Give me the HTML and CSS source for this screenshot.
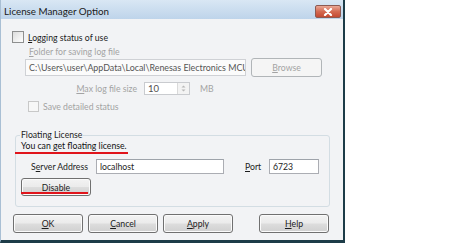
FILE: index.html
```html
<!DOCTYPE html>
<html>
<head>
<meta charset="utf-8">
<link rel="stylesheet" href="styles.css">
</head>
<body>
<div class="dialog">
  <div class="titlebar">
    <span class="title">License Manager Option</span>
    <span class="close"><svg width="12" height="8" viewBox="0 0 12 8"><path d="M3 1 L9 7 M9 1 L3 7" stroke="#fff" stroke-width="2.2" stroke-linecap="round"/></svg></span>
  </div>
  <div class="content">
    <div class="row-log">
      <span class="check"></span>
      <span class="lbl"><u>L</u>ogging status of use</span>
    </div>
    <div class="folder-lbl dis"><u>F</u>older for saving log file</div>
    <div class="row-path">
      <div class="field path">C:\Users\user\AppData\Local\Renesas Electronics MCU\</div>
      <div class="btn browse dis"><u>B</u>rowse</div>
    </div>
    <div class="row-max">
      <span class="max-lbl dis"><u>M</u>ax log file size</span>
      <div class="field spin"><span>10</span><span class="arrows"><svg width="9" height="11" viewBox="0 0 9 11"><path d="M2.5 4.5 L4.5 2.5 L6.5 4.5 Z M2.5 6.5 L4.5 8.5 L6.5 6.5 Z" fill="#b8b8b8"/></svg></span></div>
      <span class="mb dis">MB</span>
    </div>
    <div class="row-save">
      <span class="check small dis-check"></span>
      <span class="lbl dis">Save detailed status</span>
    </div>
    <div class="group">
      <div class="legend"><span>Floating License</span></div>
      <div class="msg">You can get floating license.</div>
      <div class="row-server">
        <span class="srv-lbl">S<u>e</u>rver Address</span>
        <div class="field host">localhost</div>
        <span class="port-lbl"><u>P</u>ort</span>
        <div class="field port">6723</div>
      </div>
      <div class="btn disable"><u>D</u>isable</div>
      <span class="redline line1"></span>
      <span class="redline line2"></span>
    </div>
    <div class="row-buttons">
      <div class="btn bb"><u>O</u>K</div>
      <div class="btn bb"><u>C</u>ancel</div>
      <div class="btn bb"><u>A</u>pply</div>
      <div class="btn bb help"><u>H</u>elp</div>
    </div>
  </div>
</div>
</body>
</html>
```
FILE: styles.css
```css
html, body {
  margin: 0;
  padding: 0;
  background: #ffffff;
}
body {
  font-family: Lato, "Liberation Sans", sans-serif;
  font-size: 8.7px;
  color: #1c1c1c;
  white-space: nowrap;
}
u { text-decoration: underline; text-underline-offset: 1px; text-decoration-thickness: 1px; }
.dialog {
  width: 342px;
  height: 240px;
  border-right: 2px solid #1d3c48;
  border-bottom: 3px solid #1d3c48;
  border-left: 1px solid #a9bfd4;
  background: #f2f3f5;
  display: flex;
  flex-direction: column;
}
.titlebar {
  height: 19px;
  flex: none;
  background: linear-gradient(#d9e7f4, #bed4ea);
  display: flex;
  align-items: flex-start;
  justify-content: space-between;
  padding: 0 2px 0 3px;
  box-sizing: border-box;
}
.title {
  font-size: 9.8px;
  line-height: 12px;
  margin-top: 5px;
  color: #1a1a1a;
}
.close {
  width: 24px;
  height: 11px;
  margin-top: 5px;
  border: 1px solid #8c5a52;
  border-radius: 2px;
  background: linear-gradient(#e9a896, #d46a52 50%, #c44a32);
  display: flex;
  align-items: center;
  justify-content: center;
}
.content {
  flex: 1;
  display: flex;
  flex-direction: column;
  padding: 0 0 0 11px;
}
.dis { color: #a3a3a3; }
.check {
  width: 10px;
  height: 10px;
  border: 1px solid #8e8f8f;
  background: linear-gradient(135deg, #dcdcdc, #ffffff);
  flex: none;
}
.dis-check { border-color: #c8c8c8; background: #f7f7f7; }
.row-log {
  display: flex;
  align-items: center;
  gap: 4px;
  margin-top: 12px;
  height: 12px;
}
.folder-lbl {
  margin-top: 3px;
  margin-left: 17px;
  height: 12px;
  line-height: 12px;
}
.row-path {
  display: flex;
  align-items: center;
  margin-left: 13px;
  height: 19px;
}
.field {
  background: #fff;
  border: 1px solid #abadb3;
  border-top-color: #9ea3aa;
  box-sizing: border-box;
  height: 15px;
  line-height: 13px;
  padding: 0 3px;
  overflow: hidden;
}
.path {
  width: 221px;
  height: 17px;
  line-height: 15px;
  color: #555;
  background: #fbfbfb;
  border-color: #cfd1d5;
  padding-left: 3px;
  font-size: 8.9px;
}
.btn {
  box-sizing: border-box;
  border: 1px solid #707070;
  border-radius: 3px;
  background: linear-gradient(#f3f3f3 0%, #ebebeb 48%, #dddddd 52%, #d0d0d0 100%);
  display: flex;
  align-items: center;
  justify-content: center;
  box-shadow: inset 0 0 0 1px #fbfbfb;
}
.browse {
  width: 71px;
  height: 19px;
  margin-left: 5px;
  border-color: #b1b5b8;
  background: #f5f5f5;
  box-shadow: none;
}
.row-max {
  display: flex;
  align-items: center;
  margin-top: 5px;
  height: 13px;
}
.max-lbl {
  width: 125px;
  text-align: right;
}
.spin {
  width: 46px;
  height: 13px;
  line-height: 11px;
  margin-left: 7px;
  display: flex;
  justify-content: space-between;
  padding: 0 0 0 3px;
  color: #505050;
  border-color: #c9cbcf;
  font-size: 9.5px;
}
.arrows {
  width: 11px;
  height: 11px;
  border-left: 1px solid #dadada;
  display: flex;
  align-items: center;
  justify-content: center;
  background: #f3f3f3;
}
.mb { margin-left: 10px; }
.row-save {
  display: flex;
  align-items: center;
  gap: 4px;
  margin-top: 6px;
  margin-left: 16px;
  height: 11px;
}
.small { width: 9px; height: 9px; }
.group {
  position: relative;
  margin: 23px 0 0 3px;
  width: 315px;
  height: 72px;
  box-sizing: border-box;
  border: 1px solid #d3dde3;
  border-radius: 3px;
  padding: 0 0 0 5px;
  display: flex;
  flex-direction: column;
  align-items: flex-start;
}
.legend {
  height: 12px;
  line-height: 12px;
  margin-top: -7px;
  margin-left: -1px;
}
.legend span {
  background: #f2f3f5;
  padding: 0 1px;
}
.msg {
  margin-top: -2px;
  height: 13px;
  line-height: 13px;
  color: #111;
}
.row-server {
  display: flex;
  align-items: center;
  margin-top: 7px;
  height: 15px;
}
.srv-lbl { margin-left: 10px; width: 65px; }
.field.host { width: 128px; }
.port-lbl { margin-left: 21px; width: 24px; }
.field.port { width: 50px; }
.disable {
  width: 70px;
  height: 18px;
  margin-top: 4px;
}
.redline {
  position: absolute;
  height: 2px;
  background: #e0141b;
}
.line1 { left: -1px; top: 16px; width: 113px; }
.line2 { left: 5px; top: 56px; width: 67px; }
.row-buttons {
  display: flex;
  margin-top: 7px;
  margin-left: 1px;
  gap: 5px;
}
.bb {
  width: 70px;
  height: 19px;
}
.help { margin-left: 21px; }
```
